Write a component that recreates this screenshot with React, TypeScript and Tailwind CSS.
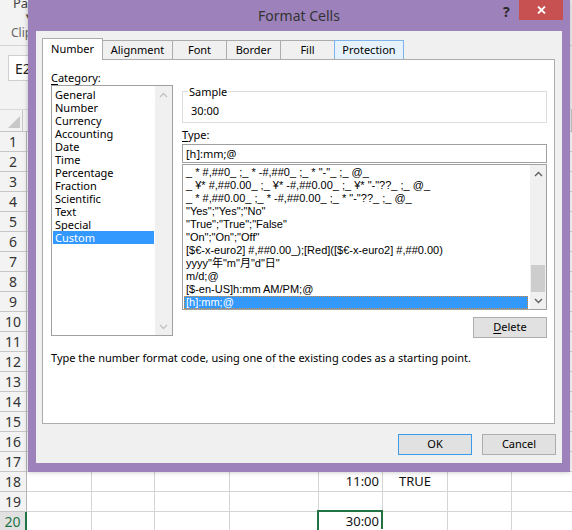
import React from "react";

const CATEGORIES = [
  "General",
  "Number",
  "Currency",
  "Accounting",
  "Date",
  "Time",
  "Percentage",
  "Fraction",
  "Scientific",
  "Text",
  "Special",
  "Custom",
];

const TYPE_ITEMS = [
  '_ * #,##0_ ;_ * -#,##0_ ;_ * "-"_ ;_ @_',
  '_ ¥* #,##0.00_ ;_ ¥* -#,##0.00_ ;_ ¥* "-"??_ ;_ @_',
  '_ * #,##0.00_ ;_ * -#,##0.00_ ;_ * "-"??_ ;_ @_',
  '"Yes";"Yes";"No"',
  '"True";"True";"False"',
  '"On";"On";"Off"',
  "[$€-x-euro2] #,##0.00_);[Red]([$€-x-euro2] #,##0.00)",
  'yyyy"年"m"月"d"日"',
  "m/d;@",
  "[$-en-US]h:mm AM/PM;@",
  "[h]:mm;@",
];

const COLS = [
  { n: "A", w: "w-[65px]" },
  { n: "B", w: "w-[63px]" },
  { n: "C", w: "w-[75px]" },
  { n: "D", w: "w-[89px]" },
  { n: "E", w: "w-[64px]" },
  { n: "F", w: "w-[65px]" },
  { n: "G", w: "w-[64px]" },
  { n: "H", w: "w-[64px]" },
];

function Chevron({ up, color }: { up: boolean; color: string }) {
  return (
    <svg width="9" height="6" viewBox="0 0 9 6" className="block">
      <polyline
        points={up ? "1,5 4.5,1.5 8,5" : "1,1 4.5,4.5 8,1"}
        fill="none"
        stroke={color}
        strokeWidth="1.4"
      />
    </svg>
  );
}

function Tab({
  label,
  w,
  selected,
  hover,
}: {
  label: string;
  w: string;
  selected?: boolean;
  hover?: boolean;
}) {
  if (selected) {
    return (
      <div
        className={`${w} h-[22px] relative z-10 bg-white border-l border-t border-r border-[#acacac] flex items-center justify-center pb-[1px]`}
      >
        {label}
      </div>
    );
  }
  return (
    <div
      className={`${w} h-[19px] mb-[1px] -ml-px relative ${
        hover
          ? "z-20 bg-[#e5f1fb] border border-b-0 border-[#7eb4ea]"
          : "z-0 bg-[#f0f0f0] border-l border-t border-r border-[#acacac]"
      } flex items-center justify-center`}
    >
      {label}
    </div>
  );
}

export default function App() {
  const rows = Array.from({ length: 20 }, (_, i) => i + 1);
  return (
    <div className="relative w-[572px] h-[530px] overflow-hidden bg-white font-['Noto_Sans',sans-serif]">
      {/* Excel background */}
      <div className="flex flex-col">
        <div className="h-[46px] bg-[#f3f3f3] border-b border-[#d5d5d5] flex flex-col pl-[13px]">
          <div className="text-[13px] leading-[13px] text-[#444] -mt-[3px]">Paste</div>
          <div className="pl-[11px] text-[8px] leading-[8px] text-[#555] mt-[2px]">▼</div>
          <div className="text-[12px] leading-[14px] text-[#666] mt-[6px] -ml-[2px]">Clipboard</div>
        </div>
        <div className="h-[64px] bg-[#f3f3f3] border-b border-[#dadada] flex flex-col pt-[9px]">
          <div className="ml-[8px] w-[80px] h-[26px] bg-white border border-[#d0d0d0] flex items-center pl-[6px] text-[14px] text-[#222]">
            E20
          </div>
        </div>
        <div className="h-[22px] flex">
          <div className="w-[27px] h-full bg-[#f3f3f3] border-r border-b border-[#c6c6c6] flex items-end justify-end pr-[2px] pb-[3px]">
            <svg width="12" height="12" viewBox="0 0 12 12">
              <polygon points="12,0 12,12 0,12" fill="#c8c8c8" />
            </svg>
          </div>
          {COLS.map((c) => (
            <div
              key={c.n}
              className={`${c.w} shrink-0 h-full bg-[#f3f3f3] border-r border-b border-[#c6c6c6] flex items-center justify-center text-[13px] text-[#444]`}
            >
              {c.n}
            </div>
          ))}
        </div>
        {rows.map((r) => (
          <div key={r} className="h-[20px] flex font-['Noto_Sans',sans-serif]">
            <div
              className={`w-[27px] shrink-0 h-full border-b border-[#c6c6c6] flex items-center justify-center text-[14px] ${
                r === 20
                  ? "bg-[#e1e1e1] text-[#217346] border-r-2 border-r-[#217346]"
                  : "bg-[#f3f3f3] text-[#333] border-r border-r-[#b6b6b6]"
              }`}
            >
              {r}
            </div>
            {COLS.map((c) => (
              <div
                key={c.n}
                className={`${c.w} shrink-0 h-full border-r border-b border-[#d4d4d4] relative flex items-center text-[13px] text-[#111] ${
                  c.n === "F" ? "justify-center" : "justify-end pr-[3px]"
                }`}
              >
                {r === 18 && c.n === "E" && "11:00"}
                {r === 18 && c.n === "F" && "TRUE"}
                {r === 20 && c.n === "E" && (
                  <>
                    30:00
                    <div className="absolute -left-[2px] -top-[2px] -right-px -bottom-px border-2 border-[#217346]" />
                    <div className="absolute -right-[3px] bottom-[-4px] w-[6px] h-[6px] bg-[#217346] border border-white" />
                  </>
                )}
              </div>
            ))}
          </div>
        ))}
      </div>

      {/* Dialog window */}
      <div className="absolute left-[28px] top-0 w-[542px] h-[472px] bg-[#9c81bb] flex flex-col shadow-[0_0_5px_rgba(0,0,0,0.25)]">
        <div className="relative h-[31px] shrink-0 flex items-center justify-center">
          <span className="text-[14px] text-[#333]">Format Cells</span>
          <span className="absolute left-[475px] top-[3px] text-[14px] leading-[18px] font-bold text-[#2a2a2a]">
            ?
          </span>
          <div className="absolute left-[491px] top-0 w-[44px] h-[20px] bg-[#c75050] flex items-center justify-center">
            <svg width="9" height="8" viewBox="0 0 9 8">
              <path d="M1 0.5 L8 7.5 M8 0.5 L1 7.5" stroke="white" strokeWidth="1.8" />
            </svg>
          </div>
        </div>

        <div className="mx-[8px] h-[432px] bg-[#f0f0f0] px-[6px] pt-[7px] flex flex-col text-[11px] text-black">
          {/* tabs */}
          <div className="h-[22px] flex items-end">
            <Tab label="Number" w="w-[61px]" selected />
            <Tab label="Alignment" w="w-[71px]" />
            <Tab label="Font" w="w-[55px]" />
            <Tab label="Border" w="w-[55px]" />
            <Tab label="Fill" w="w-[55px]" />
            <Tab label="Protection" w="w-[70px]" hover />
          </div>

          {/* panel */}
          <div className="-mt-px w-[513px] h-[365px] bg-white border border-[#acacac] flex flex-col pt-[10px] pl-[8px]">
            <div className="flex gap-[9px]">
              {/* left column */}
              <div className="w-[122px] flex flex-col">
                <div className="h-[15px] leading-[15px]">
                  <span className="underline underline-offset-2">C</span>ategory:
                </div>
                <div className="h-[251px] border border-[#a0a0a0] flex">
                  <div className="flex-1 flex flex-col pt-[2px] px-[1px]">
                    {CATEGORIES.map((c) => (
                      <div
                        key={c}
                        className={`h-[13px] leading-[13px] pl-[2px] ${
                          c === "Custom" ? "bg-[#3399ff] text-white" : ""
                        }`}
                      >
                        {c}
                      </div>
                    ))}
                  </div>
                  <div className="w-[17px] bg-[#f0f0f0] flex flex-col justify-between">
                    <div className="h-[17px] flex items-center justify-center">
                      <Chevron up color="#c2c2c2" />
                    </div>
                    <div className="h-[17px] flex items-center justify-center">
                      <Chevron up={false} color="#c2c2c2" />
                    </div>
                  </div>
                </div>
              </div>

              {/* right column */}
              <div className="w-[365px] flex flex-col pt-[21px]">
                <div className="relative h-[32px] border border-[#dcdcdc] pl-[8px] pt-[11px]">
                  <span className="absolute left-[5px] -top-[8px] px-[1px] bg-white leading-[15px]">
                    Sample
                  </span>
                  <div className="leading-[15px]">30:00</div>
                </div>
                <div className="mt-[4px] h-[15px] leading-[15px]">
                  <span className="underline underline-offset-2">T</span>ype:
                </div>
                <div className="mt-[2px] h-[19px] border border-[#a0a0a0] flex items-center pl-[3px] leading-[15px]">
                  [h]:mm;@
                </div>
                <div className="mt-[1px] h-[146px] border border-[#a0a0a0] flex font-['Liberation_Sans','Noto_Sans_CJK_JP',sans-serif]">
                  <div className="w-[347px] overflow-hidden flex flex-col pt-[1px] pl-[1px] pr-[2px]">
                    {TYPE_ITEMS.map((t, i) => {
                      const sel = i === TYPE_ITEMS.length - 1;
                      return (
                        <div
                          key={i}
                          className={`h-[13px] leading-[11px] pl-[1px] whitespace-pre border ${
                            sel
                              ? "bg-[#3399ff] text-white border-dotted border-[#d98a3a]"
                              : "border-transparent text-black"
                          }`}
                        >
                          {t}
                        </div>
                      );
                    })}
                  </div>
                  <div className="w-[16px] bg-[#f0f0f0] flex flex-col">
                    <div className="h-[17px] flex items-center justify-center">
                      <Chevron up color="#606060" />
                    </div>
                    <div className="flex-1 flex flex-col justify-end">
                      <div className="h-[27px] mx-[1px] bg-[#cdcdcd]" />
                    </div>
                    <div className="h-[17px] flex items-center justify-center">
                      <Chevron up={false} color="#606060" />
                    </div>
                  </div>
                </div>
                <div className="mt-[7px] self-end w-[74px] h-[21px] bg-[#e1e1e1] border border-[#adadad] flex items-center justify-center">
                  <span>
                    <span className="underline underline-offset-2">D</span>elete
                  </span>
                </div>
              </div>
            </div>
            <div className="mt-[12px] leading-[15px]">
              Type the number format code, using one of the existing codes as a starting point.
            </div>
          </div>

          {/* buttons */}
          <div className="mt-[10px] flex justify-end gap-[10px]">
            <div className="w-[74px] h-[21px] bg-[#e1e1e1] border border-[#3c9be8] flex items-center justify-center">
              OK
            </div>
            <div className="w-[74px] h-[21px] bg-[#e1e1e1] border border-[#adadad] flex items-center justify-center">
              Cancel
            </div>
          </div>
        </div>
      </div>
    </div>
  );
}
